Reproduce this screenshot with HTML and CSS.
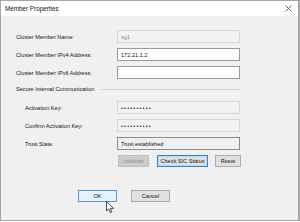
FILE: index.html
```html
<!DOCTYPE html>
<html>
<head>
<meta charset="utf-8">
<link rel="stylesheet" href="styles.css">
</head>
<body>
<div class="window">
  <div class="titlebar">
    <span class="title">Member Properties</span>
    <svg class="close" width="7" height="7" viewBox="0 0 7 7"><path d="M0.5 0.5L6.5 6.5M6.5 0.5L0.5 6.5" stroke="#555" stroke-width="0.9"/></svg>
  </div>
  <div class="content">
    <div class="row">
      <span class="label">Cluster Member Name:</span>
      <div class="field disabled"><span class="dim">sg1</span></div>
    </div>
    <div class="row">
      <span class="label">Cluster Member IPv4 Address:</span>
      <div class="field edit">172.21.1.2</div>
    </div>
    <div class="row">
      <span class="label">Cluster Member IPv6 Address:</span>
      <div class="field edit"></div>
    </div>
    <div class="section">
      <span class="section-title">Secure Internal Communication</span>
      <span class="sep"></span>
    </div>
    <div class="row sub">
      <span class="label">Activation Key:</span>
      <div class="field disabled dots">••••••••••</div>
    </div>
    <div class="row sub">
      <span class="label">Confirm Activation Key:</span>
      <div class="field disabled dots">••••••••••</div>
    </div>
    <div class="row sub">
      <span class="label">Trust State:</span>
      <div class="field readonly">Trust established</div>
    </div>
    <div class="buttons">
      <span class="btn btn-disabled b-init">Initialize</span>
      <span class="btn btn-focus b-check">Check SIC Status</span>
      <span class="btn b-reset">Reset</span>
    </div>
    <div class="footer">
      <span class="btn btn-hover b-ok">OK</span>
      <span class="btn b-cancel">Cancel</span>
    </div>
  </div>
  <svg class="cursor" width="9" height="13" viewBox="0 0 9 13"><path d="M0.5 0.5L0.5 10L2.8 7.9L4.4 11.6L5.9 11L4.4 7.4L7.6 7.4Z" fill="#fff" stroke="#222" stroke-width="0.8" stroke-linejoin="round"/></svg>
</div>
</body>
</html>
```
FILE: styles.css
```css
html, body {
  margin: 0;
  padding: 0;
  background: #ffffff;
}
body {
  font-family: "Liberation Sans", Arial, sans-serif;
  font-size: 5.6px;
  color: #111;
}
.window {
  position: relative;
  width: 300px;
  height: 221px;
  box-sizing: border-box;
  border: 1px solid #a6a6a6;
  border-right-width: 2px;
  background: #f0f0f0;
  overflow: hidden;
}
.titlebar {
  height: 15px;
  background: #ffffff;
  display: flex;
  align-items: center;
  justify-content: space-between;
  padding: 0 5px 0 4px;
}
.title {
  font-size: 6.3px;
  color: #111;
}
.close {
  display: block;
  margin-right: 1px;
}
.content {
  padding: 14px 0 0 15px;
}
.row {
  display: flex;
  align-items: center;
  height: 13px;
  margin-bottom: 5px;
}
.label {
  flex: 0 0 101px;
  white-space: nowrap;
}
.row.sub {
  padding-left: 9px;
}
.row.sub .label {
  flex-basis: 92px;
}
.field {
  width: 123px;
  height: 13px;
  box-sizing: border-box;
  border: 1px solid #9a9a9a;
  display: flex;
  align-items: center;
  padding-left: 3px;
  white-space: nowrap;
  overflow: hidden;
}
.edit {
  background: #ffffff;
}
.disabled {
  background: #f2f2f2;
  border-color: #d6d6d6;
}
.readonly {
  background: #f0f0f0;
  border-color: #8c8c8c;
}
.dim {
  color: #8a8a8a;
}
.dots {
  letter-spacing: 1.2px;
  font-size: 5.4px;
  color: #222;
}
.section {
  display: flex;
  align-items: center;
  width: 224px;
  height: 10px;
  margin-top: 2px;
  margin-bottom: 7px;
}
.section-title {
  white-space: nowrap;
}
.sep {
  flex: 1;
  height: 1px;
  background: #d0d0d0;
  margin-left: 7px;
}
.buttons {
  display: flex;
  margin-top: 4px;
  padding-left: 102px;
  height: 12px;
}
.btn {
  box-sizing: border-box;
  height: 12px;
  display: flex;
  align-items: center;
  justify-content: center;
  border: 1px solid #adadad;
  background: #e1e1e1;
  white-space: nowrap;
}
.btn-disabled {
  background: #cccccc;
  border-color: #bfbfbf;
  color: #8d8d8d;
}
.btn-focus {
  border: 1px solid #2a86d8;
  box-shadow: inset 0 0 0 1px #bcd8f1;
}
.btn-hover {
  background: #e5f1fb;
  border-color: #4a9be0;
}
.b-init { width: 31px; }
.b-check { width: 51px; margin-left: 8px; }
.b-reset { width: 26px; margin-left: 7px; }
.footer {
  display: flex;
  margin-top: 23px;
  padding-left: 62px;
}
.b-ok { width: 39px; height: 12px; }
.b-cancel { width: 39px; height: 12px; margin-left: 14px; }
.cursor {
  position: absolute;
  left: 105px;
  top: 200px;
}
```
